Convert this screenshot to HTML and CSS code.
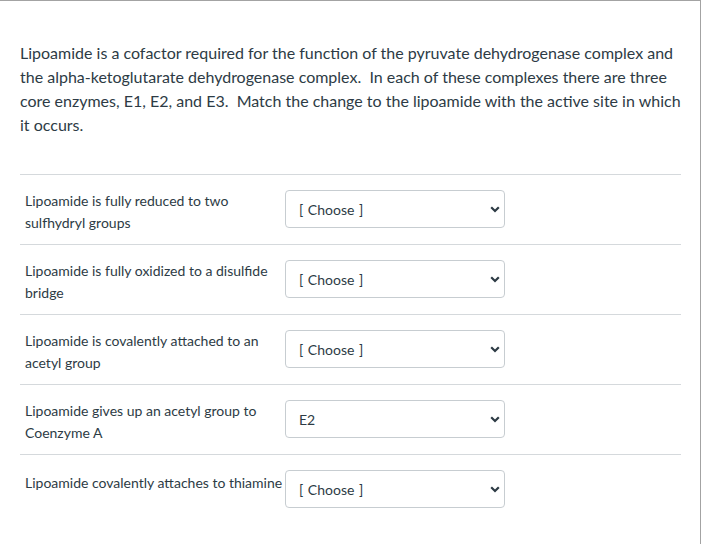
FILE: index.html
```html
<!DOCTYPE html>
<html lang="en">
<head>
<meta charset="utf-8">
<title>Matching question</title>
<link rel="stylesheet" href="styles.css">
</head>
<body>
<div class="question">
  <p class="prompt">Lipoamide is a cofactor required for the function of the pyruvate dehydrogenase complex and the alpha-ketoglutarate dehydrogenase complex.&nbsp; In each of these complexes there are three core enzymes, E1, E2, and E3.&nbsp; Match the change to the lipoamide with the active site in which it occurs.</p>
  <div class="answers">
    <div class="row">
      <div class="label">Lipoamide is fully reduced to two sulfhydryl groups</div>
      <div class="select"><span>[ Choose ]</span><svg class="chev" width="10" height="7" viewBox="0 0 10 7"><path d="M1.2 1.2 L5 5 L8.8 1.2" fill="none" stroke="#2d3b45" stroke-width="2.2"/></svg></div>
    </div>
    <div class="row">
      <div class="label">Lipoamide is fully oxidized to a disulfide bridge</div>
      <div class="select"><span>[ Choose ]</span><svg class="chev" width="10" height="7" viewBox="0 0 10 7"><path d="M1.2 1.2 L5 5 L8.8 1.2" fill="none" stroke="#2d3b45" stroke-width="2.2"/></svg></div>
    </div>
    <div class="row">
      <div class="label">Lipoamide is covalently attached to an acetyl group</div>
      <div class="select"><span>[ Choose ]</span><svg class="chev" width="10" height="7" viewBox="0 0 10 7"><path d="M1.2 1.2 L5 5 L8.8 1.2" fill="none" stroke="#2d3b45" stroke-width="2.2"/></svg></div>
    </div>
    <div class="row">
      <div class="label">Lipoamide gives up an acetyl group to Coenzyme A</div>
      <div class="select"><span>E2</span><svg class="chev" width="10" height="7" viewBox="0 0 10 7"><path d="M1.2 1.2 L5 5 L8.8 1.2" fill="none" stroke="#2d3b45" stroke-width="2.2"/></svg></div>
    </div>
    <div class="row">
      <div class="label single">Lipoamide covalently attaches to thiamine</div>
      <div class="select"><span>[ Choose ]</span><svg class="chev" width="10" height="7" viewBox="0 0 10 7"><path d="M1.2 1.2 L5 5 L8.8 1.2" fill="none" stroke="#2d3b45" stroke-width="2.2"/></svg></div>
    </div>
  </div>
</div>
</body>
</html>
```
FILE: styles.css
```css
html, body {
  margin: 0;
  padding: 0;
  background: #fff;
}
body {
  font-family: Lato, "Noto Sans", sans-serif;
  color: #2d3b45;
}
.question {
  box-sizing: border-box;
  width: 701px;
  min-height: 544px;
  border-top: 1px solid #a3a3a3;
  border-right: 1px solid #a3a3a3;
  padding: 40px 19px 0 20px;
}
.prompt {
  margin: 0 0 37px 0;
  font-size: 16px;
  line-height: 24px;
}
.row {
  box-sizing: border-box;
  height: 70px;
  border-top: 1px solid #d5d9dc;
  padding: 15px 0 0 5px;
  display: flex;
  align-items: flex-start;
}
.label {
  width: 260px;
  flex: none;
  font-size: 14px;
  line-height: 22px;
}
.label.single {
  margin-top: 2px;
}
.select {
  box-sizing: border-box;
  width: 220px;
  height: 38px;
  border: 1px solid #c7cdd1;
  border-radius: 4px;
  display: flex;
  align-items: center;
  justify-content: space-between;
  padding: 0 4px 0 13px;
  font-size: 14px;
  word-spacing: 1px;
  background: #fff;
}
.select span {
  padding-top: 1px;
}
.chev {
  display: block;
}
```
